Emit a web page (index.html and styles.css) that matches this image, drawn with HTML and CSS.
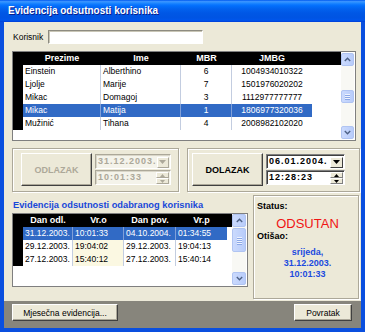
FILE: index.html
```html
<!DOCTYPE html>
<html lang="hr">
<head>
    <meta charset="UTF-8">
    <title>Evidencija odsutnosti korisnika</title>
    <link rel="stylesheet" href="styles.css">
</head>
<body>

    <div id="window">
        <div id="title-bar">Evidencija odsutnosti korisnika</div>
        <div id="frame">
            <div id="client">

                <div id="user-row">
                    <span class="label">Korisnik</span>
                    <div id="user-input" class="field"></div>
                </div>

                <div id="users-grid" class="grid">
                    <div class="grid-data">
                        <div class="grid-row users head"><span></span><span>Prezime</span><span>Ime</span><span>MBR</span><span>JMBG</span></div>
                        <div class="grid-row users"><span class="strip"></span><span>Einstein</span><span>Alberthino</span><span class="c">6</span><span class="c last">1004934010322</span></div>
                        <div class="grid-row users"><span class="strip"></span><span>Ljolje</span><span>Marije</span><span class="c">7</span><span class="c last">1501976020202</span></div>
                        <div class="grid-row users"><span class="strip"></span><span>Mikac</span><span>Domagoj</span><span class="c">3</span><span class="c last">1112977777777</span></div>
                        <div class="grid-row users sel"><span class="strip"></span><span>Mikac</span><span>Matija</span><span class="c">1</span><span class="c last">1806977320036</span></div>
                        <div class="grid-row users"><span class="strip"></span><span>Mužinić</span><span>Tihana</span><span class="c">4</span><span class="c last">2008982102020</span></div>
                    </div>
                    <div class="vscroll">
                        <div class="sb-btn"><svg width="7" height="5" viewBox="0 0 7 5"><path d="M0.8 4 L3.5 1.3 L6.2 4" stroke="#4d6185" stroke-width="1.4" fill="none"/></svg></div>
                        <div class="sb-thumb small"><i></i><i></i><i></i></div>
                        <div class="sb-fill"></div>
                        <div class="sb-btn"><svg width="7" height="5" viewBox="0 0 7 5"><path d="M0.8 1 L3.5 3.7 L6.2 1" stroke="#4d6185" stroke-width="1.4" fill="none"/></svg></div>
                    </div>
                </div>

                <div id="actions">
                    <div id="gb-out" class="groupbox">
                        <button class="btn btn-big" disabled>ODLAZAK</button>
                        <div class="pickers">
                            <div class="combo disabled">
                                <span class="val">31.12.2003.</span>
                                <span class="drop"><svg width="7" height="4" viewBox="0 0 7 4"><path d="M0 0 H7 L3.5 4 Z" fill="#aca899"/></svg></span>
                            </div>
                            <div class="combo disabled">
                                <span class="val">10:01:33</span>
                                <span class="spin">
                                    <span class="spin-btn"><svg width="5" height="3" viewBox="0 0 5 3"><path d="M0 3 H5 L2.5 0 Z" fill="#aca899"/></svg></span>
                                    <span class="spin-btn"><svg width="5" height="3" viewBox="0 0 5 3"><path d="M0 0 H5 L2.5 3 Z" fill="#aca899"/></svg></span>
                                </span>
                            </div>
                        </div>
                    </div>
                    <div id="gb-in" class="groupbox">
                        <button class="btn btn-big">DOLAZAK</button>
                        <div class="pickers wide">
                            <div class="combo">
                                <span class="val">06.01.2004.</span>
                                <span class="drop"><svg width="7" height="4" viewBox="0 0 7 4"><path d="M0 0 H7 L3.5 4 Z" fill="#000"/></svg></span>
                            </div>
                            <div class="combo">
                                <span class="val">12:28:23</span>
                                <span class="spin">
                                    <span class="spin-btn"><svg width="5" height="3" viewBox="0 0 5 3"><path d="M0 3 H5 L2.5 0 Z" fill="#000"/></svg></span>
                                    <span class="spin-btn"><svg width="5" height="3" viewBox="0 0 5 3"><path d="M0 0 H5 L2.5 3 Z" fill="#000"/></svg></span>
                                </span>
                            </div>
                        </div>
                    </div>
                </div>

                <div id="lower">
                    <div id="history">
                        <div class="caption">Evidencija odsutnosti odabranog korisnika</div>
                        <div id="history-grid" class="grid">
                            <div class="grid-data">
                                <div class="grid-row hist head"><span></span><span>Dan odl.</span><span>Vr.o</span><span>Dan pov.</span><span>Vr.p</span></div>
                                <div class="grid-row hist sel"><span class="strip"></span><span>31.12.2003.</span><span class="cream">10:01:33</span><span>04.10.2004.</span><span class="last">01:34:55</span></div>
                                <div class="grid-row hist"><span class="strip"></span><span>29.12.2003.</span><span class="cream">19:04:02</span><span>29.12.2003.</span><span class="last">19:04:13</span></div>
                                <div class="grid-row hist"><span class="strip"></span><span>27.12.2003.</span><span class="cream">15:40:12</span><span>27.12.2003.</span><span class="last">15:40:14</span></div>
                            </div>
                            <div class="vscroll">
                                <div class="sb-btn"><svg width="7" height="5" viewBox="0 0 7 5"><path d="M0.8 4 L3.5 1.3 L6.2 4" stroke="#4d6185" stroke-width="1.4" fill="none"/></svg></div>
                                <div class="sb-thumb big"><i></i><i></i><i></i><i></i></div>
                                <div class="sb-fill"></div>
                                <div class="sb-btn"><svg width="7" height="5" viewBox="0 0 7 5"><path d="M0.8 1 L3.5 3.7 L6.2 1" stroke="#4d6185" stroke-width="1.4" fill="none"/></svg></div>
                            </div>
                        </div>
                    </div>
                    <div id="status-box" class="groupbox">
                        <div class="status-label">Status:</div>
                        <div class="status-value">ODSUTAN</div>
                        <div class="status-label">Otišao:</div>
                        <div class="status-time">srijeda,<br>31.12.2003.<br>10:01:33</div>
                    </div>
                </div>

            </div>
            <div id="footer">
                <button class="btn btn-foot" id="month-btn">Mjesečna evidencija...</button>
                <button class="btn btn-foot" id="back-btn">Povratak</button>
            </div>
        </div>
    </div>

</body>
</html>
```

FILE: styles.css
```css
* {
    box-sizing: border-box;
}
html, body {
    margin: 0;
    padding: 0;
}
body {
    width: 365px;
    height: 332px;
    background: #0a4fdf;
    font-family: "Liberation Sans", Arial, sans-serif;
    font-size: 8.5px;
    color: #000;
}
#window {
    width: 365px;
    height: 332px;
    display: flex;
    flex-direction: column;
}
#title-bar {
    height: 22px;
    flex: none;
    padding-left: 8px;
    color: #fff;
    font-size: 10px;
    font-weight: bold;
    line-height: 22px;
    text-shadow: 1px 1px 0 #0a1e8c;
    background: linear-gradient(180deg, #0058ee 0%, #3a93ff 7%, #288eff 12%, #127dff 18%, #036ffc 26%, #0262ee 40%, #0057e5 60%, #0054e3 80%, #0055eb 92%, #003dd7 100%);
}
#frame {
    flex: 1;
    display: flex;
    flex-direction: column;
    border: 4px solid #0a4fdf;
    border-top: 0;
}
#client {
    height: 279px;
    background: #ece9d8;
    padding: 8px 0 0 8px;
}

/* user row */
#user-row {
    display: flex;
    align-items: center;
    height: 14px;
}
.label {
    width: 36px;
    padding-left: 1px;
}
.field {
    background: #fff;
    border: 1px solid;
    border-color: #8d8b80 #fff #fff #8d8b80;
    box-shadow: inset 1px 1px 0 #c9c6b6;
}
#user-input {
    width: 155px;
    height: 14px;
}

/* grids */
.grid {
    display: flex;
    background: #fff;
    border: 1px solid #7f7f7f;
}
#users-grid {
    margin-top: 7px;
    width: 344px;
    height: 90px;
}
#history-grid {
    width: 236px;
    height: 74px;
}
.grid-data {
    flex: 1;
}
.grid-row {
    display: grid;
    height: 13px;
    line-height: 13px;
}
.grid-row.users {
    grid-template-columns: 10px 78px 80px 51px 80px;
}
.grid-row.hist {
    grid-template-columns: 10px 50px 51px 52px 51px;
}
.grid-row > span {
    padding: 0 2px;
    white-space: nowrap;
    overflow: hidden;
    border-right: 1px solid #c3cde0;
}
.grid-row > span.strip {
    background: #000;
    border-right: 0;
}
.grid-row > span.last {
    border-right: 0;
}
.grid-row > span.c {
    text-align: center;
}
.grid-row > span.cream {
    background: #fbf8e2;
}
.grid-row.head {
    background: #000;
    color: #fff;
    font-size: 9px;
    font-weight: bold;
}
.grid-row.head > span {
    border-right: 0;
    text-align: center;
}
.grid-row.sel > span {
    background: #316ac5;
    color: #fff;
    border-right-color: #7f9fd8;
}
.grid-row.sel > span.strip {
    background: #000;
}

/* xp scrollbar */
.vscroll {
    width: 13px;
    margin: 1px 1px 1px 0;
    display: flex;
    flex-direction: column;
    background: #f8f8f4;
}
#history-grid .vscroll {
    width: 14px;
    margin-top: 0;
}
.sb-btn, .sb-thumb {
    background: linear-gradient(90deg, #cbdafd, #b8ccfa);
    border: 1px solid #b0c4f2;
    border-radius: 2px;
}
.sb-btn {
    height: 13px;
    display: flex;
    align-items: center;
    justify-content: center;
}
.sb-thumb {
    display: flex;
    flex-direction: column;
    justify-content: center;
    align-items: center;
    gap: 1px;
}
.sb-thumb i {
    display: block;
    width: 5px;
    height: 1px;
    background: #eef3ff;
    box-shadow: 0 1px 0 #8ca8e6;
}
.sb-thumb.small {
    margin-top: 24px;
    height: 13px;
}
.sb-thumb.big {
    margin-top: 1px;
    height: 24px;
}
.sb-fill {
    flex: 1;
}

/* buttons */
.btn {
    font-family: "Liberation Sans", Arial, sans-serif;
    font-size: 8.5px;
    color: #000;
    background: #ece9d8;
    border: 1px solid;
    border-color: #fff #404040 #404040 #fff;
    box-shadow: inset -1px -1px 0 #aca899;
    padding: 0;
    margin: 0;
}
.btn-big {
    width: 71px;
    height: 33px;
    font-size: 9px;
    font-weight: bold;
}
.btn-big:disabled {
    color: #aca899;
}

/* group boxes */
.groupbox {
    border: 1px solid #aca899;
    box-shadow: inset 1px 1px 0 #fff, 1px 1px 0 #fff;
}
#actions {
    display: flex;
    gap: 8px;
    margin-top: 7px;
}
#gb-out {
    width: 167px;
    height: 44px;
    display: flex;
    padding: 4px 0 0 8px;
}
#gb-in {
    width: 173px;
    height: 44px;
    display: flex;
    padding: 4px 0 0 4px;
}
.pickers {
    display: flex;
    flex-direction: column;
    gap: 1px;
    margin: 1px 0 0 3px;
}
.combo {
    width: 76px;
    height: 15px;
    display: flex;
    align-items: center;
    background: #fff;
    border: 1px solid;
    border-color: #808080 #fff #fff #808080;
    box-shadow: inset 1px 1px 0 #404040;
}
.pickers.wide .combo {
    width: 79px;
}
.combo .val {
    flex: 1;
    padding-left: 2px;
    font-size: 9px;
    font-weight: bold;
    letter-spacing: 1px;
    line-height: 13px;
}
.combo.disabled {
    background: #f4f3ea;
    color: #aca899;
    border-color: #aca899 #fff #fff #aca899;
    box-shadow: inset 1px 1px 0 #d9d6c8;
}
.drop {
    width: 13px;
    height: 11px;
    margin: 1px 1px 0 0;
    display: flex;
    align-items: center;
    justify-content: center;
    background: #ece9d8;
    border: 1px solid;
    border-color: #fff #404040 #404040 #fff;
}
.combo.disabled .drop, .combo.disabled .spin-btn {
    border-color: #fff #aca899 #aca899 #fff;
}
.spin {
    width: 13px;
    margin: 1px 1px 0 0;
    display: flex;
    flex-direction: column;
}
.spin-btn {
    height: 6px;
    display: flex;
    align-items: center;
    justify-content: center;
    background: #ece9d8;
    border: 1px solid;
    border-color: #fff #808080 #808080 #fff;
}

/* lower part */
#lower {
    display: flex;
    gap: 5px;
    margin-top: 3px;
}
#history {
    width: 236px;
}
.caption {
    height: 18px;
    padding: 5px 0 0 1px;
    line-height: 11px;
    color: #1848d8;
    font-size: 9.3px;
    font-weight: bold;
}
#status-box {
    width: 106px;
    height: 104px;
    padding: 5px 0 0 3px;
}
.status-label {
    line-height: 11px;
    font-size: 9px;
    font-weight: bold;
}
.status-value {
    margin-top: 4px;
    line-height: 15px;
    font-size: 13px;
    color: #f01414;
    text-align: center;
}
.status-time {
    margin-top: 5px;
    line-height: 11px;
    font-size: 9px;
    font-weight: bold;
    color: #1b4adf;
    text-align: center;
}

/* footer */
#footer {
    flex: 1;
    display: flex;
    justify-content: space-between;
    align-items: flex-start;
    padding: 3px 9px 0 8px;
    background: #87857c;
}
.btn-foot {
    height: 17px;
}
#month-btn {
    width: 106px;
}
#back-btn {
    width: 58px;
}
```
